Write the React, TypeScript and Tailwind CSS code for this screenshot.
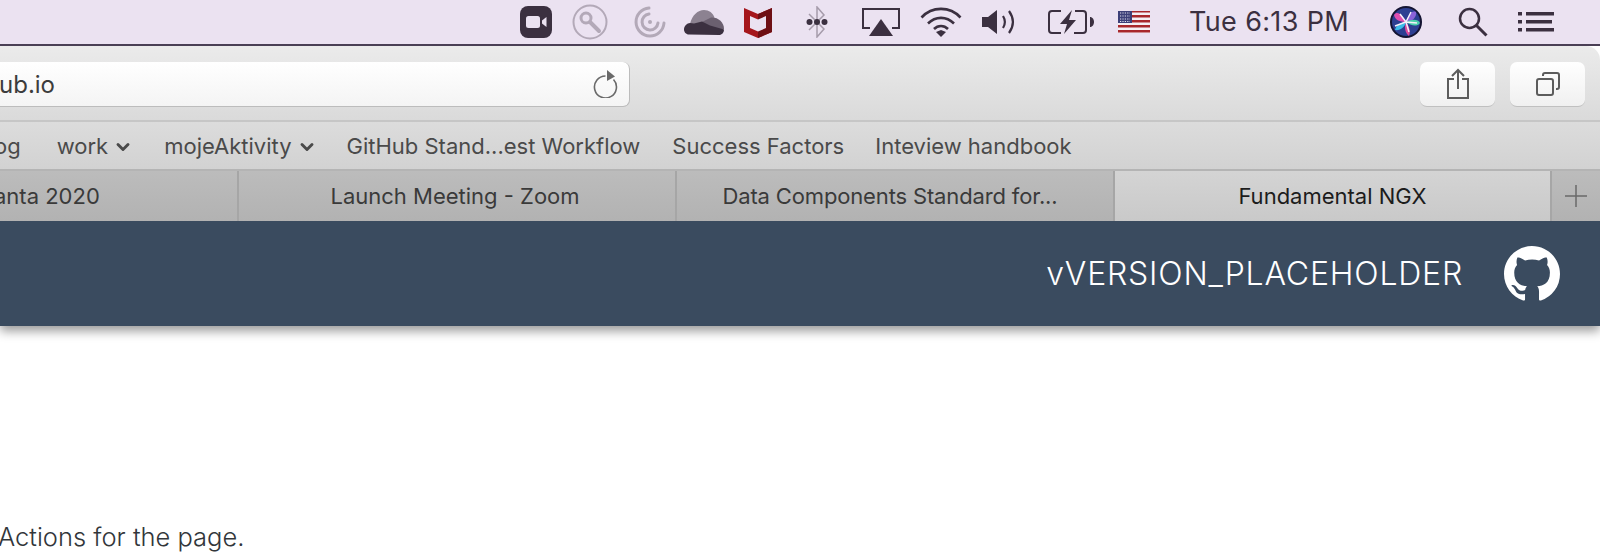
import { ChevronDown } from 'lucide-react';

const bookmarks = [
    { label: 'og', left: '-ml-[6px]' },
    { label: 'work', left: 'ml-[36px]', menu: true },
    { label: 'mojeAktivity', left: 'ml-[31px]', menu: true },
    { label: 'GitHub Stand...est Workflow', left: 'ml-[30px]' },
    { label: 'Success Factors', left: 'ml-[32px]' },
    { label: 'Inteview handbook', left: 'ml-[31px]' },
];

const ZoomIcon = () => (
    <svg width="32" height="32" viewBox="0 0 32 32" className="ml-[520px]">
        <rect width="32" height="32" rx="8" fill="#3b3040" />
        <rect x="6" y="10" width="14" height="12" rx="2.5" fill="#ebe2f1" />
        <path d="M22 14.5l4.5-3.5v10l-4.5-3.5z" fill="#ebe2f1" />
    </svg>
);

const KeyIcon = () => (
    <svg width="36" height="36" viewBox="0 0 36 36" fill="none" className="ml-5">
        <circle cx="18" cy="18" r="16.5" stroke="#b3a9b8" strokeWidth="2" />
        <circle cx="14" cy="14" r="5" stroke="#b3a9b8" strokeWidth="3" />
        <path d="M18 18l9 9" stroke="#b3a9b8" strokeWidth="4" strokeLinecap="round" />
    </svg>
);

const SpiralIcon = () => (
    <svg width="32" height="32" viewBox="0 0 32 32" fill="none" stroke="#b3a9b8" strokeLinecap="round" className="ml-[26px]">
        <path d="M15 2A14 14 0 1030 17" strokeWidth="3" />
        <path d="M15 8a8 8 0 109 9" strokeWidth="3" />
        <circle cx="16" cy="16" r="2" fill="#b3a9b8" stroke="none" />
    </svg>
);

const CloudIcon = () => (
    <svg width="40" height="25" viewBox="0 0 40 25" className="ml-[18px]">
        <path d="M6 14C8 5 14 0 20 0c5 0 9 3 10.500 7.500L24 14z" fill="#8c8291" />
        <path d="M18 12l9-4.500C34 7 40 12 40 19l-6 3z" fill="#6b6070" />
        <path d="M5 24.500C2 24.500 0 22 0 19.500 0 16 3 13 6 13l4 .5 8-2 8 4 14 4c0 3-2 5.500-5 5.500z" fill="#3b3040" />
    </svg>
);

const McafeeIcon = () => (
    <svg width="28" height="32" viewBox="0 0 28 32" className="ml-[20px]">
        <path d="M0 2l14 6 14-6v24l-14 6-14-6z" fill="#a5161c" />
        <path d="M14 8l14-6v24l-14 6z" fill="#6e0f14" />
        <path d="M6 10l8 3.500 8-3.500v12l-8 3.500-8-3.500z" fill="#ebe2f1" />
    </svg>
);

const BluetoothIcon = () => (
    <svg width="22" height="32" viewBox="0 0 22 32" fill="none" className="ml-[34px]">
        <path d="M3 8l15 15-7 8V1l7 8L3 24" stroke="#a69cab" strokeWidth="1.500" />
        <circle cx="3.500" cy="16" r="3" fill="#3b3040" />
        <circle cx="11" cy="16" r="3" fill="#3b3040" />
        <circle cx="18.500" cy="16" r="3" fill="#3b3040" />
    </svg>
);

const AirplayIcon = () => (
    <svg width="38" height="28" viewBox="0 0 38 28" fill="none" className="ml-[34px]">
        <path d="M8 20H1V1h36v19h-7" stroke="#3b3040" strokeWidth="2" />
        <path d="M19 11l12 17H7z" fill="#3b3040" />
    </svg>
);

const WifiIcon = () => (
    <svg width="42" height="30" viewBox="0 0 42 30" fill="none" stroke="#3b3040" strokeWidth="2.600" className="ml-5">
        <path d="M1.500 10.500C12-1 30-1 40.500 10.500" />
        <path d="M8 16.500c7.500-7.500 18.500-7.500 26 0" />
        <path d="M14 22c4-4 10-4 14 0" />
        <path d="M16 25l5-2 5 2-5 5z" fill="#3b3040" stroke="none" />
    </svg>
);

const VolumeIcon = () => (
    <svg width="33" height="24" viewBox="0 0 33 24" fill="none" className="ml-5">
        <path d="M0 7h6l9-7v24l-9-7H0z" fill="#3b3040" />
        <path d="M21 6c2.500 4 2.500 8 0 12" stroke="#3b3040" strokeWidth="2.200" />
        <path d="M27 1c5 7 5 15 0 22" stroke="#3b3040" strokeWidth="2.200" />
    </svg>
);

const BatteryIcon = () => (
    <svg width="46" height="24" viewBox="0 0 46 24" fill="none" className="ml-[33px]">
        <path d="M13 1H4a3 3 0 00-3 3v16a3 3 0 003 3h9M27 1h8a3 3 0 013 3v16a3 3 0 01-3 3h-9" stroke="#3b3040" strokeWidth="2" />
        <path d="M24 0L12 14h7l-3 10 12-14h-7z" fill="#3b3040" />
        <path d="M42 7c2.500 0 4 2.500 4 5s-1.500 5-4 5z" fill="#3b3040" />
    </svg>
);

const FlagIcon = () => (
    <svg width="32" height="22" viewBox="0 0 32 22" className="ml-[24px]">
        <rect width="32" height="22" fill="#f4eff4" />
        <path d="M0 0h32v1.500H0zM14 4h18v2.500H14zM14 9h18v2.500H14zM0 14h32v2.500H0zM0 19h32v2.500H0z" fill="#a8282c" />
        <rect width="14" height="12" fill="#3c3f78" />
        <path d="M2 2h10M2 5h10M2 8h10M2 10.500h10" stroke="#dfe0ee" strokeWidth="1.200" strokeDasharray="1.200 1.200" />
    </svg>
);

const SiriIcon = () => (
    <svg width="32" height="32" viewBox="0 0 32 32" fill="none" className="ml-[41px]">
        <circle cx="16" cy="16" r="16" fill="#141432" />
        <circle cx="16" cy="16" r="14" fill="#2d3f92" />
        <path d="M16 16C11 7 7 5 4 9c1 5 6 7 12 7z" fill="#e04eb0" />
        <path d="M16 16c2-7 6-12 10-10 1 5-4 10-10 10z" fill="#8a62d8" />
        <path d="M16 16c6-3 12-3 14 1-3 4-9 3-14-1z" fill="#4cd0ac" />
        <path d="M16 16c3 4 5 9 3 14-4-3-5-9-3-14z" fill="#e04c9e" />
        <path d="M16 16c-5 0-10 3-11 8 5 1 10-3 11-8z" fill="#3cbce8" />
        <path d="M5 20l11-4 5-10M16 16l11 1M16 16l3 10M16 16L10 8" stroke="#f4f0fa" strokeWidth="1.500" />
    </svg>
);

const SearchIcon = () => (
    <svg width="30" height="30" viewBox="0 0 30 30" fill="none" stroke="#3b3040" strokeWidth="2.500" className="ml-9">
        <circle cx="11.500" cy="11.500" r="9.500" />
        <path d="M18.500 18.500L28.500 28.500" strokeWidth="3" />
    </svg>
);

const ListIcon = () => (
    <svg width="36" height="20" viewBox="0 0 36 20" fill="#3b3040" className="ml-[30px]">
        <path d="M0 0h4v3.500H0zM8 0h28v3.500H8zM0 8h4v3.500H0zM8 8h26v3.500H8zM0 16h4v3.500H0zM8 16h28v3.500H8z" />
    </svg>
);

const MenuBar = () => (
    <div className="flex h-[44px] items-center bg-[#ebe2f1]">
        <ZoomIcon />
        <KeyIcon />
        <SpiralIcon />
        <CloudIcon />
        <McafeeIcon />
        <BluetoothIcon />
        <AirplayIcon />
        <WifiIcon />
        <VolumeIcon />
        <BatteryIcon />
        <FlagIcon />
        <span className="ml-[39px] w-[160px] whitespace-nowrap text-[27px] tracking-[0.35px] text-[#3b3040]">
            Tue 6:13 PM
        </span>
        <SiriIcon />
        <SearchIcon />
        <ListIcon />
    </div>
);

const Toolbar = () => (
    <div className="flex h-[76px] items-start rounded-tr-[14px] border-b-2 border-[#c6c6c6] bg-gradient-to-b from-[#ebebeb] to-[#dadada] pt-[16px]">
        <div className="flex h-[45px] w-[630px] items-center justify-between rounded-r-[7px] border-b border-r border-[#bcbcbc] bg-gradient-to-b from-white to-[#f4f4f4] pr-[10px]">
            <span className="-ml-[1px] mt-[1px] text-[24px] text-[#3c3c3c]">ub.io</span>
            <svg width="26" height="28" viewBox="0 0 26 28" fill="none">
                <path d="M20.500 9.500A11 11 0 1112.500 6" stroke="#6a6a6a" strokeWidth="1.600" />
                <path d="M14 0l8 6.500-8 4.500z" fill="#6a6a6a" />
            </svg>
        </div>
        <button className="ml-[790px] flex h-[45px] w-[75px] items-center justify-center rounded-[7px] border-b border-[#c0c0c0] bg-gradient-to-b from-white to-[#f0f0f0]">
            <svg width="24" height="32" viewBox="0 0 24 32" fill="none" stroke="#5c5c5c" strokeWidth="2">
                <path d="M8 11H2v19h20V11h-6" />
                <path d="M12 21V2M6 8l6-6 6 6" />
            </svg>
        </button>
        <button className="ml-[15px] flex h-[45px] w-[75px] items-center justify-center rounded-[7px] border-b border-[#c0c0c0] bg-gradient-to-b from-white to-[#f0f0f0]">
            <svg width="24" height="24" viewBox="0 0 24 24" fill="none" stroke="#5c5c5c" strokeWidth="2">
                <rect x="1" y="7" width="16" height="16" rx="2" />
                <path d="M7 4V3a2 2 0 012-2h12a2 2 0 012 2v12a2 2 0 01-2 2h-1" />
            </svg>
        </button>
    </div>
);

const Bookmarks = () => (
    <div className="flex h-[49px] items-center border-b-2 border-[#b4b4b4] bg-gradient-to-b from-[#dcdcdc] to-[#d2d2d2] pt-[1px] text-[22px] text-[#4a4a4a]">
        {bookmarks.map((item) => (
            <span key={item.label} className={`${item.left} flex items-center whitespace-nowrap`}>
                {item.label}
                {item.menu && <ChevronDown size={20} strokeWidth={3.5} className="ml-[5px] mt-[2px]" />}
            </span>
        ))}
    </div>
);

const Tabs = () => (
    <div className="flex h-[50px] text-[22px] text-[#3a3a3a]">
        <div className="flex w-[237px] items-center bg-gradient-to-b from-[#bcbcbc] to-[#b2b2b2]">
            <span className="-ml-[6px] whitespace-nowrap">anta 2020</span>
        </div>
        <div className="flex w-[438px] items-center justify-center border-l-2 border-[#a6a6a6] bg-gradient-to-b from-[#bcbcbc] to-[#b2b2b2] pr-[4px]">
            Launch Meeting - Zoom
        </div>
        <div className="flex w-[438px] items-center justify-center border-l-2 border-[#a6a6a6] bg-gradient-to-b from-[#bcbcbc] to-[#b2b2b2] pr-[10px] tracking-[-0.15px]">
            Data Components Standard for...
        </div>
        <div className="flex w-[437px] items-center justify-center border-l-2 border-[#a6a6a6] bg-gradient-to-b from-[#d4d4d4] to-[#c9c9c9] text-[#1c1c1c]">
            Fundamental NGX
        </div>
        <div className="flex w-[50px] items-center justify-center border-l-2 border-[#a6a6a6] bg-gradient-to-b from-[#bcbcbc] to-[#b2b2b2]">
            <svg width="24" height="24" viewBox="0 0 24 24" stroke="#6a6a6a" strokeWidth="1.500">
                <path d="M12 1v22M1 12h22" />
            </svg>
        </div>
    </div>
);

const Header = () => (
    <header className="flex h-[105px] items-center justify-end bg-[#3a4b5f] pr-[40px] text-white shadow-[0_5px_10px_rgba(0,0,0,0.4)]">
        <span className="text-[32px] font-light tracking-[0.8px]">vVERSION_PLACEHOLDER</span>
        <svg width="56" height="56" viewBox="0 0 16 16" fill="#fff" className="ml-[41px]">
            <path d="M8 0C3.580 0 0 3.580 0 8c0 3.540 2.290 6.530 5.470 7.590.4.070.55-.17.55-.38 0-.19-.01-.82-.01-1.490-2.010.37-2.530-.49-2.690-.94-.09-.23-.48-.94-.82-1.130-.28-.15-.68-.52-.01-.53.63-.01 1.080.58 1.230.82.72 1.210 1.870.87 2.330.66.07-.52.28-.87.51-1.070-1.780-.2-3.640-.89-3.640-3.950 0-.87.31-1.590.82-2.150-.08-.2-.36-1.020.08-2.120 0 0 .67-.21 2.200.82.64-.18 1.320-.27 2-.27.68 0 1.360.09 2 .27 1.530-1.040 2.200-.82 2.200-.82.44 1.100.16 1.920.08 2.120.51.56.82 1.270.82 2.150 0 3.070-1.870 3.750-3.650 3.950.29.25.54.73.54 1.480 0 1.070-.01 1.930-.01 2.200 0 .21.15.46.55.38A8.013 8.013 0 0016 8c0-4.420-3.580-8-8-8z" />
        </svg>
    </header>
);

const App = () => (
    <div className="h-[552px] w-[1600px] overflow-hidden bg-white font-['Inter',sans-serif]">
        <MenuBar />
        <div className="border-t-2 border-[#4a3f55]">
            <Toolbar />
            <Bookmarks />
            <Tabs />
            <Header />
        </div>
        <p className="-ml-[2px] mt-[192px] text-[25.5px] font-light text-[#32363a]">
            Actions for the page.
        </p>
    </div>
);

export default App;
